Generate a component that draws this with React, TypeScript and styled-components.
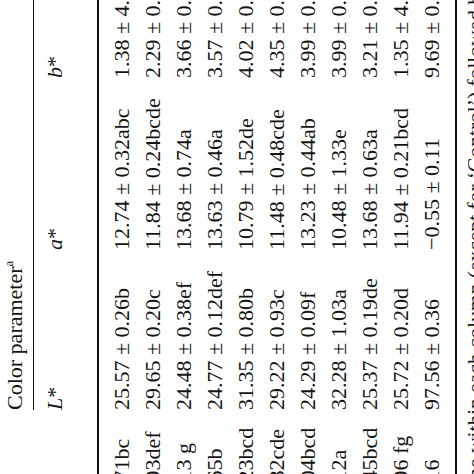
import React from "react";
import styled, { createGlobalStyle } from "styled-components";

const GlobalStyle = createGlobalStyle`
  html, body {
    margin: 0;
    padding: 0;
    background: #ffffff;
  }
`;

const SViewport = styled.div`
  width: 474px;
  height: 474px;
  overflow: hidden;
  background: #ffffff;
`;

// the page is a scanned table turned on its side
const SPage = styled.div`
  width: 474px;
  height: 474px;
  transform: rotate(-90deg);
  font-family: "Liberation Serif", "Times New Roman", serif;
  font-size: 22px;
  color: #141414;
`;

const STable = styled.table`
  margin-left: -24px;
  border-collapse: collapse;
  table-layout: fixed;
  width: 668px;
`;

const SCol = styled.col<{ $w: number }>`
  width: ${(p) => p.$w}px;
`;

const SHeadCell = styled.th`
  padding: 0;
  text-align: left;
  font-weight: normal;
  white-space: nowrap;
`;

const SGroupCell = styled(SHeadCell)`
  height: 31px;
  padding-top: 2px;
  line-height: 26px;
  vertical-align: top;
  border-bottom: 1px solid #111;
`;

const SColCell = styled(SHeadCell)`
  height: 55px;
  padding-top: 8px;
  line-height: 26px;
  vertical-align: top;
`;

const SVar = styled.i`
  font-style: italic;
`;

const SSup = styled.sup`
  font-size: 13px;
  vertical-align: 9px;
  line-height: 0;
`;

const SRow = styled.tr<{ $first?: boolean; $last?: boolean }>`
  td {
    padding: ${(p) => (p.$first ? "7px" : "0")} 0 ${(p) => (p.$last ? "8px" : "0")};
    border-top: ${(p) => (p.$first ? "2px solid #111" : "none")};
    border-bottom: ${(p) => (p.$last ? "2px solid #111" : "none")};
  }
`;

const SCell = styled.td`
  height: 31px;
  line-height: 31px;
  white-space: nowrap;
  text-align: left;
  vertical-align: top;
`;

const SNote = styled.td`
  padding: 3px 0 0;
  font-size: 21.5px;
  line-height: 31px;
  text-indent: -96px;
  white-space: nowrap;
`;

const rows = [
  ["4.71bc", "25.57 ± 0.26b", "12.74 ± 0.32abc", "1.38 ± 4.12ab"],
  ["5.93def", "29.65 ± 0.20c", "11.84 ± 0.24bcde", "2.29 ± 0.31bc"],
  ["4.13 g", "24.48 ± 0.38ef", "13.68 ± 0.74a", "3.66 ± 0.22a"],
  ["4.65b", "24.77 ± 0.12def", "13.63 ± 0.46a", "3.57 ± 0.41a"],
  ["6.23bcd", "31.35 ± 0.80b", "10.79 ± 1.52de", "4.02 ± 0.18a"],
  ["5.82cde", "29.22 ± 0.93c", "11.48 ± 0.48cde", "4.35 ± 0.26a"],
  ["6.04bcd", "24.29 ± 0.09f", "13.23 ± 0.44ab", "3.99 ± 0.12a"],
  ["7.12a", "32.28 ± 1.03a", "10.48 ± 1.33e", "3.99 ± 0.35a"],
  ["5.45bcd", "25.37 ± 0.19de", "13.68 ± 0.63a", "3.21 ± 0.27b"],
  ["4.96 fg", "25.72 ± 0.20d", "11.94 ± 0.21bcd", "1.35 ± 4.08c"],
  ["0.16", "97.56 ± 0.36", "−0.55 ± 0.11", "9.69 ± 0.14"],
];

export default function App() {
  return (
    <>
      <GlobalStyle />
      <SViewport>
        <SPage>
          <STable>
            <colgroup>
              <SCol $w={88} />
              <SCol $w={160} />
              <SCol $w={172} />
              <SCol $w={248} />
            </colgroup>
            <thead>
              <tr>
                <SHeadCell />
                <SGroupCell colSpan={3}>
                  Color parameter<SSup>a</SSup>
                </SGroupCell>
              </tr>
              <tr>
                <SColCell />
                <SColCell>
                  <SVar>L</SVar>*
                </SColCell>
                <SColCell>
                  <SVar>a</SVar>*
                </SColCell>
                <SColCell>
                  <SVar>b</SVar>*
                </SColCell>
              </tr>
            </thead>
            <tbody>
              {rows.map((r, i) => (
                <SRow key={i} $first={i === 0} $last={i === rows.length - 1}>
                  {r.map((v, j) => (
                    <SCell key={j}>{v}</SCell>
                  ))}
                </SRow>
              ))}
            </tbody>
            <tfoot>
              <tr>
                <SNote colSpan={4}>
                  in the same line within each column (except for ‘Control’) followed by different letters are
                  significantly different (p &lt; 0.05).
                </SNote>
              </tr>
            </tfoot>
          </STable>
        </SPage>
      </SViewport>
    </>
  );
}
